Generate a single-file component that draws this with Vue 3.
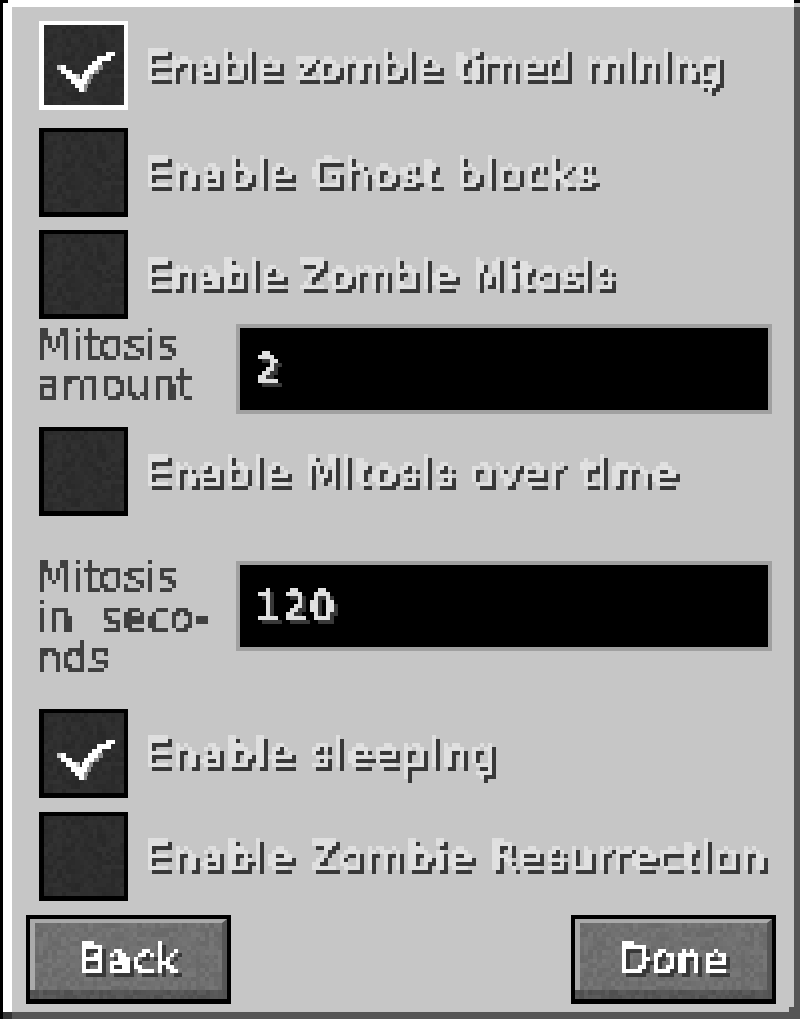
<script setup>
function noise(cols, rows, base, spread, seed) {
  let s = seed
  const out = []
  for (let y = 0; y < rows; y++) {
    for (let x = 0; x < cols; x++) {
      s = (s * 1664525 + 1013904223) % 4294967296
      const v = Math.round(base + (s / 4294967296 - 0.5) * spread)
      out.push({ x, y, fill: `rgb(${v},${v},${v})` })
    }
  }
  return out
}
const boxTexture = noise(18, 18, 45, 10, 77)
const faceTexture = noise(44, 18, 112, 16, 31)
const shadeTexture = noise(46, 2, 86, 14, 9)

const rows = [
  { id: 1, kind: 'check', label: 'Enable zombie timed mining', checked: true, focus: true, cls: 'r1' },
  { id: 2, kind: 'check', label: 'Enable Ghost blocks', cls: 'r2' },
  { id: 3, kind: 'check', label: 'Enable Zombie Mitosis', cls: 'r3' },
  { id: 4, kind: 'field', lines: ['Mitosis', 'amount'], value: '2', cls: 'r4' },
  { id: 5, kind: 'check', label: 'Enable Mitosis over time', cls: 'r5' },
  { id: 6, kind: 'field', lines: ['Mitosis', 'in seco-', 'nds'], value: '120', cls: 'r6' },
  { id: 7, kind: 'check', label: 'Enable sleeping', checked: true, cls: 'r7' },
  { id: 8, kind: 'check', label: 'Enable Zombie Resurrection', cls: 'r8' }
]
</script>

<template>
  <div class="screen">
    <svg class="defs" width="0" height="0" aria-hidden="true">
      <defs>
        <filter id="pix-label" x="-2%" y="-10%" width="104%" height="125%" color-interpolation-filters="sRGB">
          <feFlood x="1" y="1" width="1" height="1" flood-color="#000" />
          <feComposite width="4" height="4" />
          <feTile result="grid" />
          <feComposite in="SourceGraphic" in2="grid" operator="in" />
          <feComponentTransfer><feFuncA type="discrete" tableValues="0 1 1 1" /></feComponentTransfer>
          <feMorphology operator="dilate" radius="1" result="p3" />
          <feOffset in="p3" dx="1" dy="1" result="a" />
          <feOffset in="p3" dx="1" dy="0" result="b" />
          <feOffset in="p3" dx="0" dy="1" result="c" />
          <feMerge result="px"><feMergeNode in="p3" /><feMergeNode in="a" /><feMergeNode in="b" /><feMergeNode in="c" /></feMerge>
          <feOffset in="px" dx="4" dy="4" result="off" />
          <feFlood flood-color="#383838" />
          <feComposite in2="off" operator="in" result="shadow" />
          <feMerge><feMergeNode in="shadow" /><feMergeNode in="px" /></feMerge>
        </filter>
        <filter id="pix-plain" x="-2%" y="-10%" width="104%" height="125%" color-interpolation-filters="sRGB">
          <feFlood x="1" y="1" width="1" height="1" flood-color="#000" />
          <feComposite width="4" height="4" />
          <feTile result="grid" />
          <feComposite in="SourceGraphic" in2="grid" operator="in" />
          <feComponentTransfer><feFuncA type="discrete" tableValues="0 1 1 1" /></feComponentTransfer>
          <feMorphology operator="dilate" radius="1" result="p3" />
          <feOffset in="p3" dx="1" dy="1" result="a" />
          <feOffset in="p3" dx="1" dy="0" result="b" />
          <feOffset in="p3" dx="0" dy="1" result="c" />
          <feMerge><feMergeNode in="p3" /><feMergeNode in="a" /><feMergeNode in="b" /><feMergeNode in="c" /></feMerge>
        </filter>
      </defs>
    </svg>

    <div class="panel">
      <i class="bit bit-tl"></i><i class="bit bit-tr"></i><i class="bit bit-bl"></i><i class="bit bit-br"></i>
      <template v-for="row in rows" :key="row.id">
        <div v-if="row.kind === 'check'" class="row" :class="row.cls">
          <div class="box" :class="{ focus: row.focus }">
            <svg class="tex" viewBox="0 0 18 18" preserveAspectRatio="none" shape-rendering="crispEdges">
              <rect v-for="(c, i) in boxTexture" :key="i" :x="c.x" :y="c.y" width="1.02" height="1.02" :fill="c.fill" />
            </svg>
            <svg v-if="row.checked" class="check" viewBox="0 0 80 80" shape-rendering="crispEdges">
              <path fill="#8c8c8c" d="M54 40h5v5h-5z M50 45h5v4h-5z M45 49h4v5h-4z M43 54h4v5h-4z M40 59h4v4h-4z M40 63h3v4h-3z" />
              <path fill="#fff" d="M62 27h9v4h-9z M53 31h14v5h-14z M48 36h10v4h-10z M13 40h9v5h-9z M44 40h10v5h-10z M17 45h11v4h-11z M40 45h10v4h-10z M22 49h13v5h-13z M38 49h7v5h-7z M27 54h16v5h-16z M31 59h9v4h-9z M35 63h5v4h-5z" />
              <path fill="#c8c8c8" d="M13 40h4v5h-4z M32 49h4v5h-4z" />
            </svg>
          </div>
          <span class="label-wrap"><span class="text-light">{{ row.label }}</span></span>
        </div>
        <div v-else class="field" :class="row.cls">
          <div class="field-label"><span class="text-dark"><template v-for="(l, i) in row.lines" :key="i">{{ l }}<br v-if="i < row.lines.length - 1" /></template></span></div>
          <div class="input"><span class="text-input">{{ row.value }}</span></div>
        </div>
      </template>

      <div class="actions">
        <button v-for="b in ['Back', 'Done']" :key="b" class="btn" type="button">
          <svg class="tex" viewBox="0 0 44 18" preserveAspectRatio="none" shape-rendering="crispEdges">
            <rect v-for="(c, i) in faceTexture" :key="i" :x="c.x" :y="c.y" width="1.02" height="1.02" :fill="c.fill" />
          </svg>
          <svg class="shade" viewBox="0 0 46 2" preserveAspectRatio="none" shape-rendering="crispEdges">
            <rect v-for="(c, i) in shadeTexture" :key="i" :x="c.x" :y="c.y" width="1.02" height="1.02" :fill="c.fill" />
          </svg>
          <span class="text-btn">{{ b }}</span>
        </button>
      </div>
    </div>
  </div>
</template>

<style>
html, body { margin: 0; background: #c6c6c6; }
</style>

<style scoped>
.screen {
  width: 800px;
  height: 1019px;
  box-sizing: border-box;
  border-left: 3px solid #000;
  overflow: hidden;
}
.defs { position: absolute; }
.panel {
  position: relative;
  height: 100%;
  box-sizing: border-box;
  background: #c6c6c6;
  border-style: solid;
  border-color: #fff #555 #555 #fff;
  border-width: 7px 6px 7px 9px;
  padding: 14px 22px 0 27px;
  font-family: "DejaVu Sans", sans-serif;
}
.bit { position: absolute; display: block; }
.bit-tl { left: -9px; top: -7px; width: 5px; height: 3px; background: #000; }
.bit-tr { right: -6px; top: -7px; width: 6px; height: 7px; background: #c6c6c6; border-top: 3px solid #000; box-sizing: border-box; }
.bit-bl { left: -9px; bottom: -7px; width: 9px; height: 7px; background: #333; }
.bit-br { right: 0; bottom: 0; width: 5px; height: 5px; background: #555; }

.row { display: flex; align-items: center; gap: 16px; height: 89px; }
.r1 { margin-bottom: 18px; }
.r2 { margin-bottom: 13px; }
.r3 { margin-bottom: 5px; }
.r7 { margin-top: 31px; margin-bottom: 14px; }
.r8 { margin-bottom: 14px; }

.box {
  position: relative;
  width: 89px;
  height: 89px;
  flex: none;
  box-sizing: border-box;
  border-style: solid;
  border-color: #000;
  border-width: 4px 4px 5px 5px;
  background: #2d2d2d;
}
.box.focus { border-color: #fff; }
.tex { position: absolute; inset: 0; width: 100%; height: 100%; display: block; }
.check { position: absolute; inset: 0; width: 100%; height: 100%; display: block; }

.label-wrap { display: block; }
.text-light {
  display: inline-block;
  font-size: 40px;
  line-height: 52px;
  letter-spacing: 1px;
  white-space: nowrap;
  color: #e0e0e0;
  -webkit-text-stroke: 0.6px #e0e0e0;
  filter: url(#pix-label);
}
.r1 .text-light { letter-spacing: 0.2px; }
.r2 .text-light { letter-spacing: 2.5px; }
.r3 .text-light { letter-spacing: 0.9px; }
.r5 .text-light { letter-spacing: 1.7px; }
.r7 .text-light { letter-spacing: 2.4px; }
.r8 .text-light { letter-spacing: 2.25px; }

.field { display: flex; }
.r4 { align-items: center; height: 90px; margin-bottom: 13px; }
.r4 .field-label { padding-bottom: 10px; }
.r6 { align-items: flex-start; margin-top: 40px; }
.r6 .input { margin-top: 5px; }
.field-label { width: 197px; flex: none; margin-left: -3px; margin-right: 3px; }
.text-dark {
  display: inline-block;
  font-size: 40px;
  line-height: 40.5px;
  letter-spacing: 0.4px;
  word-spacing: 14px;
  white-space: nowrap;
  color: #404040;
  -webkit-text-stroke: 0.6px #404040;
  filter: url(#pix-plain);
}
.input {
  flex: 1;
  height: 90px;
  box-sizing: border-box;
  background: #000;
  border: 4px solid #a0a0a0;
  display: flex;
  align-items: center;
  padding-left: 14px;
}
.text-input {
  display: inline-block;
  font-size: 40px;
  line-height: 52px;
  letter-spacing: 2px;
  color: #e0e0e0;
  -webkit-text-stroke: 0.6px #e0e0e0;
  filter: url(#pix-label);
}

.actions {
  display: flex;
  justify-content: space-between;
  margin: 0 -4px 0 -13px;
}
.btn {
  position: relative;
  width: 205px;
  height: 89px;
  padding: 0;
  box-sizing: border-box;
  border: 4px solid #000;
  border-bottom-width: 5px;
  background: #707070;
  font-family: inherit;
  box-shadow: none;
  display: flex;
  align-items: center;
  justify-content: center;
  overflow: hidden;
  outline: none;
}
.btn::before {
  content: "";
  position: absolute;
  inset: 0;
  z-index: 2;
  border-style: solid;
  border-color: #aaa #565656 transparent #aaa;
  border-width: 4px 5px 0 5px;
}
.btn .tex { z-index: 0; }
.shade { position: absolute; left: 0; right: 0; bottom: 0; width: 100%; height: 9px; z-index: 3; display: block; }
.text-btn {
  position: relative;
  z-index: 4;
  font-size: 40px;
  line-height: 52px;
  letter-spacing: 1.2px;
  color: #fff;
  -webkit-text-stroke: 0.6px #fff;
  filter: url(#pix-label);
}
</style>
